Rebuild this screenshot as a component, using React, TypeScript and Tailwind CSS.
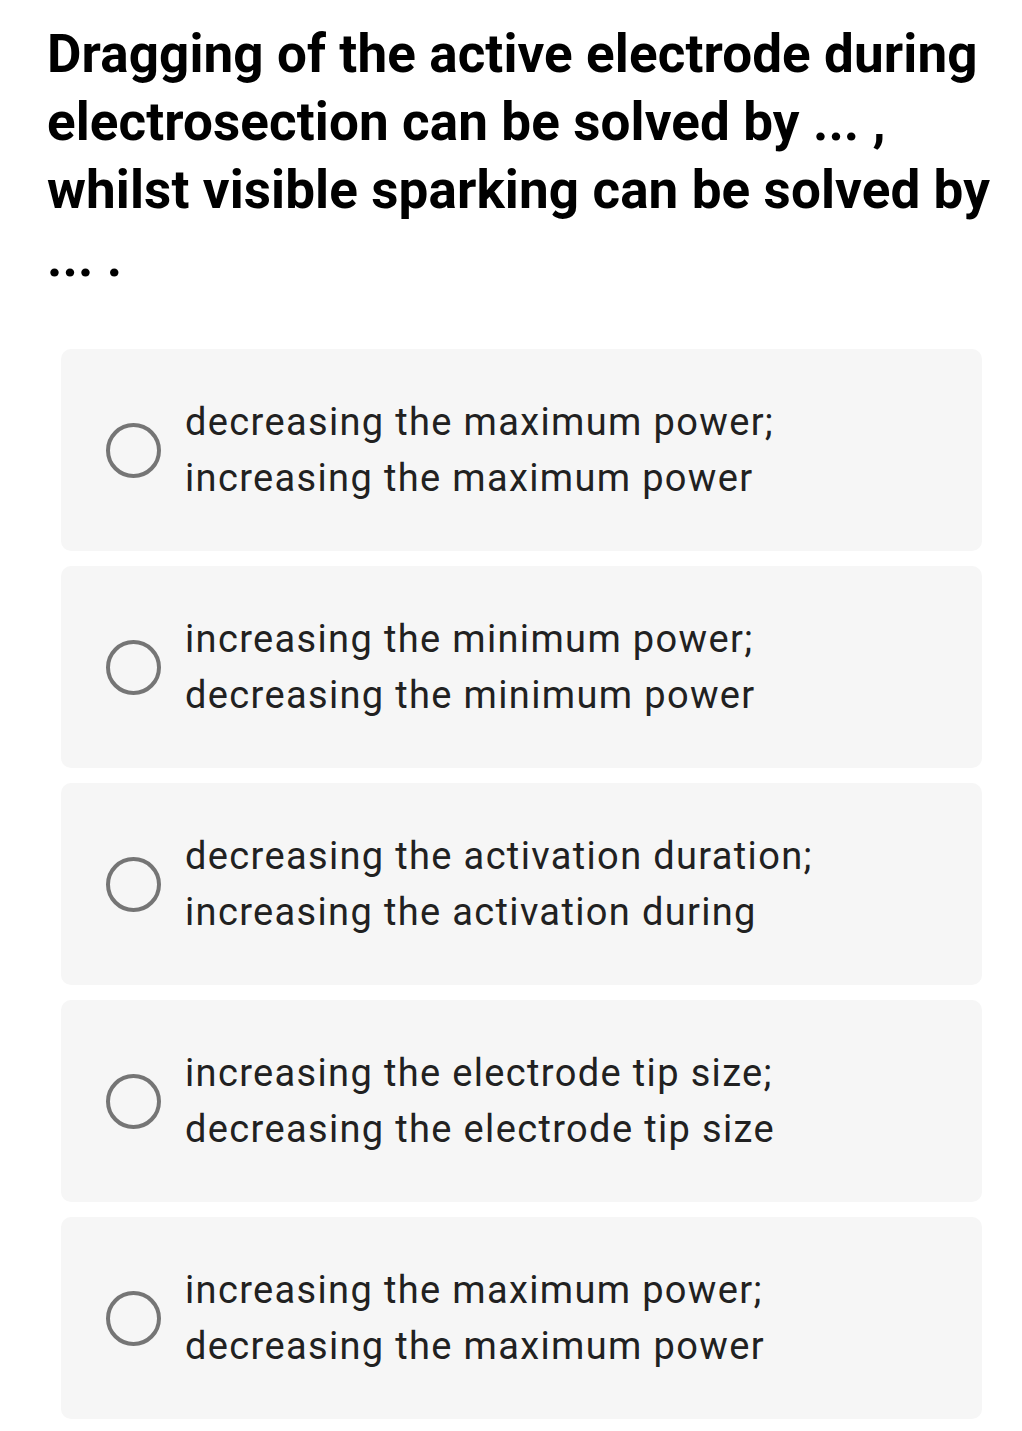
import React from 'react';

const options = [
  ['decreasing the maximum power;', 'increasing the maximum power'],
  ['increasing the minimum power;', 'decreasing the minimum power'],
  ['decreasing the activation duration;', 'increasing the activation during'],
  ['increasing the electrode tip size;', 'decreasing the electrode tip size'],
  ['increasing the maximum power;', 'decreasing the maximum power'],
];

export default function App() {
  return (
    <div className="min-h-screen w-[1022px] bg-white font-['Roboto','Liberation_Sans',sans-serif]">
      {/* 질문 */}
      <h1 className="pl-[47px] pt-[20px] text-[53px] leading-[68px] font-bold text-black tracking-[0.1px]">
        Dragging of the active electrode during
        <br />
        electrosection can be solved by ... ,
        <br />
        whilst visible sparking can be solved by
        <br />
        ... .
      </h1>

      {/* 보기 */}
      <div className="mt-[57px] ml-[61px] w-[921px] flex flex-col gap-[15px]">
        {options.map((lines, i) => (
          <label
            key={i}
            className="h-[202px] rounded-[10px] bg-[#f6f6f6] flex items-center pl-[45px]"
          >
            <span className="w-[55px] h-[55px] shrink-0 rounded-full border-[4px] border-[#757575]" />
            <span className="ml-[24px] text-[38px] leading-[56px] text-[#212121] tracking-[1.35px]">
              {lines[0]}
              <br />
              {lines[1]}
            </span>
          </label>
        ))}
      </div>
    </div>
  );
}
